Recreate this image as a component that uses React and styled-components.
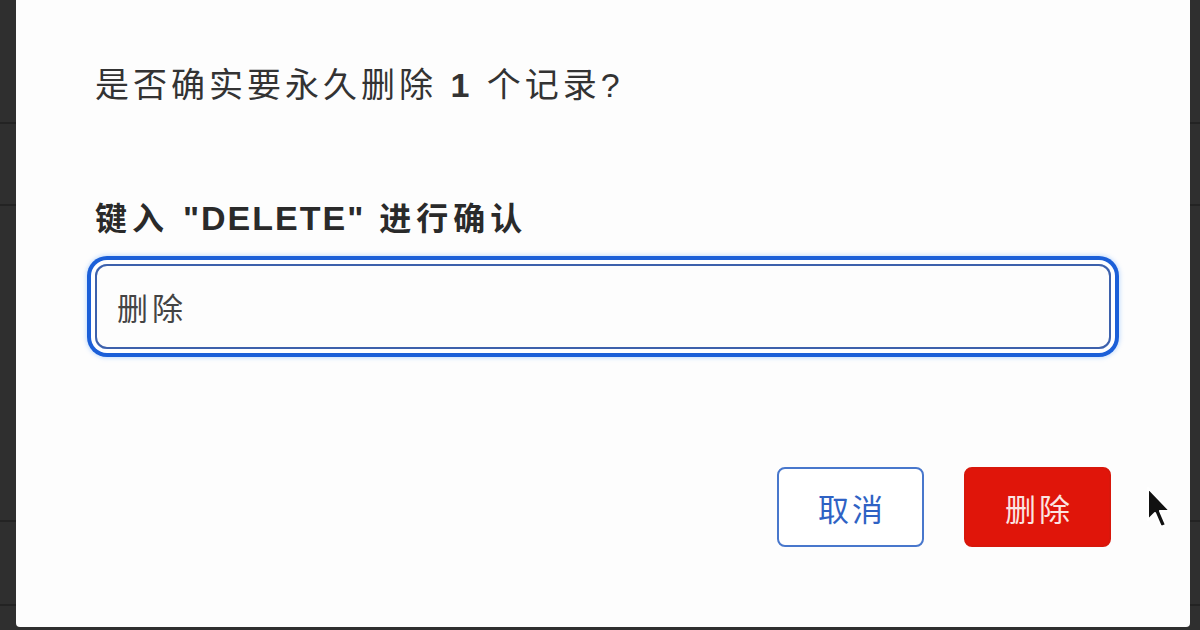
import styled, { createGlobalStyle } from 'styled-components';

const GlobalStyle = createGlobalStyle`
  html, body {
    margin: 0;
    padding: 0;
    background: #2f2f2f;
    overflow: hidden;
  }
`;

const Page = styled.div`
  position: relative;
  width: 1200px;
  height: 630px;
  background: #2f2f2f;
  overflow: hidden;
  font-family: 'Liberation Sans', 'Noto Sans CJK SC', sans-serif;
`;

const BehindTable = styled.div`
  display: flex;
  flex-direction: column;
`;

const BehindRow = styled.div`
  height: ${({ h }) => h}px;
  border-bottom: 2px solid #232323;
`;

const Modal = styled.div`
  position: absolute;
  top: -10px;
  left: 16px;
  width: 1174px;
  height: 637px;
  box-sizing: border-box;
  background: #fdfdfd;
  border-radius: 4px;
  padding: 72px 79px 80px;
  display: flex;
  flex-direction: column;
`;

const Title = styled.h2`
  margin: 0;
  font-size: 34px;
  font-weight: 400;
  line-height: 46px;
  letter-spacing: 4px;
  color: #333;
  white-space: pre;
`;

const Num = styled.b`
  font-weight: 700;
`;

const Label = styled.label`
  margin-top: 89px;
  font-size: 32px;
  font-weight: 700;
  line-height: 43px;
  letter-spacing: 5px;
  color: #2a2a2a;
  white-space: pre;
`;

const Keyword = styled.span`
  font-size: 34px;
  letter-spacing: 2px;
`;

const Input = styled.div`
  margin-top: 23px;
  height: 85px;
  box-sizing: border-box;
  border: 2px solid #3d61ac;
  border-radius: 12px;
  box-shadow: 0 0 0 4px #fff, 0 0 0 8px #1b5fd8, 0 0 4px 9px rgba(90, 160, 255, 0.35);
  display: flex;
  align-items: center;
  padding-left: 20px;
  font-family: 'Noto Sans CJK SC', sans-serif;
  font-size: 31px;
  letter-spacing: 4px;
  color: #444;
`;

const Footer = styled.div`
  margin-top: auto;
  display: flex;
  justify-content: flex-end;
  gap: 40px;
`;

const Button = styled.button`
  width: 147px;
  height: 80px;
  box-sizing: border-box;
  border-radius: 8px;
  font-family: 'Noto Sans CJK SC', sans-serif;
  font-size: 31px;
  letter-spacing: 3px;
  padding: 0 0 0 3px;
  cursor: pointer;
  border: 2px solid ${({ danger }) => (danger ? '#d8170b' : '#4877cc')};
  background: ${({ danger }) => (danger ? '#e0150a' : '#fff')};
  color: ${({ danger }) => (danger ? '#fbe4e2' : '#2f62c4')};
`;

const Cursor = styled.svg`
  position: absolute;
  left: 1145px;
  top: 486px;
  width: 30px;
  height: 46px;
`;

export default function App() {
  return (
    <Page>
      <GlobalStyle />
      <BehindTable>
        <BehindRow h={122} />
        <BehindRow h={80} />
        <BehindRow h={314} />
        <BehindRow h={82} />
      </BehindTable>
      <Modal>
        <Title>
          是否确实要永久删除 <Num>1</Num> 个记录?
        </Title>
        <Label>
          键入 <Keyword>"DELETE"</Keyword> 进行确认
        </Label>
        <Input>删除</Input>
        <Footer>
          <Button>取消</Button>
          <Button danger>删除</Button>
        </Footer>
      </Modal>
      <Cursor viewBox="0 0 30 46">
        <path
          d="M3 2 L3 34 L10 27 L16 41 L21 39 L15 25 L25 25 Z"
          fill="#111"
          stroke="#fff"
          strokeWidth="2"
          strokeLinejoin="round"
        />
      </Cursor>
    </Page>
  );
}
